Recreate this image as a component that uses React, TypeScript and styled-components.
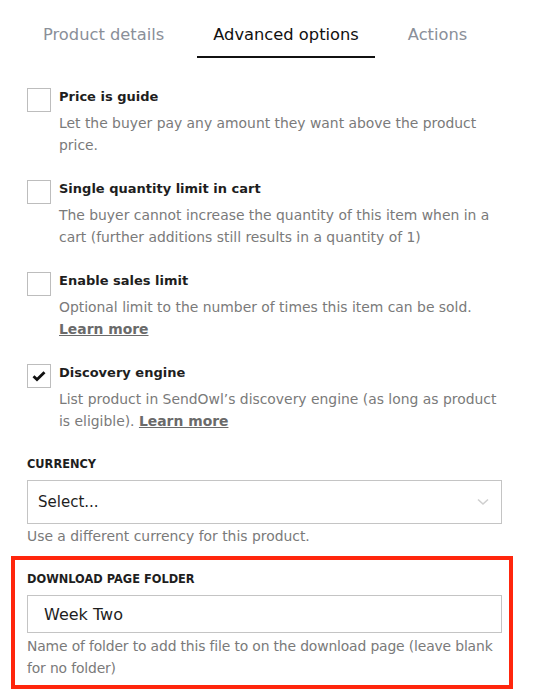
import * as React from 'react'
import styled, {createGlobalStyle} from 'styled-components'

const GlobalStyle = createGlobalStyle`
  html, body {
    margin: 0;
    padding: 0;
    background: #fff;
  }
  *, *:before, *:after {
    box-sizing: border-box;
  }
  body {
    font-family: 'DejaVu Sans', 'Open Sans', sans-serif;
    color: #222;
  }
`

const Page = styled.div`
  width: 535px;
  padding: 15px 33px 0 27px;
`

const Tabs = styled.nav`
  display: flex;
  gap: 17px;
  margin-bottom: 29px;
`

const Tab = styled.div<{active?: boolean}>`
  padding: 8px 16px 9px;
  font-size: 16.3px;
  line-height: 24px;
  color: ${p => (p.active ? '#111' : '#8a8f99')};
  border-bottom: 2px solid ${p => (p.active ? '#111' : 'transparent')};
  white-space: nowrap;
`

const OptionList = styled.div`
  display: flex;
  flex-direction: column;
  gap: 23px;
`

const Option = styled.div`
  display: flex;
  gap: 8px;
  align-items: flex-start;
`

const Box = styled.div<{checked?: boolean}>`
  flex: none;
  width: 24px;
  height: 24px;
  margin-top: 1px;
  border: 1px solid #bdbdbd;
  display: flex;
  align-items: center;
  justify-content: center;
`

const OptionText = styled.div`
  flex: 1;
`

const Title = styled.div`
  font-size: 13px;
  font-weight: 700;
  line-height: 20px;
  color: #1e1e1e;
  margin-bottom: 5px;
`

const Desc = styled.div`
  font-size: 13.9px;
  line-height: 22px;
  color: #7a7a7a;
`

const More = styled.a`
  color: #6a6a6a;
  font-weight: 700;
  text-decoration: underline;
`

const Field = styled.div<{spaced?: boolean}>`
  display: flex;
  flex-direction: column;
  margin-top: ${p => (p.spaced ? '24px' : '0')};
`

const Label = styled.div`
  font-size: 11.4px;
  font-weight: 700;
  line-height: 16px;
  color: #1e1e1e;
  text-transform: uppercase;
  margin-bottom: 8px;
`

const Select = styled.div`
  height: 44px;
  border: 1px solid #c4c4c4;
  display: flex;
  align-items: center;
  justify-content: space-between;
  padding: 0 12px 0 10px;
  font-size: 15px;
  color: #1e1e1e;
`

const Input = styled.div`
  height: 38px;
  border: 1px solid #c4c4c4;
  display: flex;
  align-items: center;
  padding: 0 16px;
  font-size: 16px;
  color: #1e1e1e;
`

const Help = styled.div<{wide?: boolean}>`
  font-size: 13.9px;
  line-height: 22px;
  color: #7a7a7a;
  margin-top: ${p => (p.wide ? '2px' : '1px')};
  margin-right: ${p => (p.wide ? '-8px' : '0')};
  letter-spacing: ${p => (p.wide ? '-0.15px' : 'normal')};
`

const Highlight = styled.div`
  margin: 9px -11px 0 -16px;
  border: 4px solid #ff260d;
  padding: 11px 7px 6px 12px;
`

const Check = () => (
  <svg width="14" height="12" viewBox="0 0 14 12">
    <path d="M1.5 6.2 L5 9.6 L12.5 2.2" fill="none" stroke="#111" strokeWidth="2.8" />
  </svg>
)

const Chevron = () => (
  <svg width="12" height="8" viewBox="0 0 12 8">
    <path d="M1 1.5 L6 6 L11 1.5" fill="none" stroke="#cfcfcf" strokeWidth="1.6" />
  </svg>
)

const options = [
  {
    title: 'Price is guide',
    desc: 'Let the buyer pay any amount they want above the product price.',
  },
  {
    title: 'Single quantity limit in cart',
    desc: 'The buyer cannot increase the quantity of this item when in a cart (further additions still results in a quantity of 1)',
  },
  {
    title: 'Enable sales limit',
    desc: 'Optional limit to the number of times this item can be sold.',
    more: true,
    breakMore: true,
  },
  {
    title: 'Discovery engine',
    desc: 'List product in SendOwl’s discovery engine (as long as product is eligible).',
    more: true,
    checked: true,
  },
]

export default function App() {
  return (
    <>
      <GlobalStyle />
      <Page>
        <Tabs>
          <Tab>Product details</Tab>
          <Tab active>Advanced options</Tab>
          <Tab>Actions</Tab>
        </Tabs>
        <OptionList>
          {options.map(o => (
            <Option key={o.title}>
              <Box checked={o.checked}>{o.checked && <Check />}</Box>
              <OptionText>
                <Title>{o.title}</Title>
                <Desc>
                  {o.desc}
                  {o.breakMore && <br />}
                  {o.more && !o.breakMore && ' '}
                  {o.more && <More>Learn more</More>}
                </Desc>
              </OptionText>
            </Option>
          ))}
        </OptionList>
        <Field spaced>
          <Label>Currency</Label>
          <Select>
            <span>Select...</span>
            <Chevron />
          </Select>
          <Help>Use a different currency for this product.</Help>
        </Field>
        <Highlight>
          <Field>
            <Label>Download page folder</Label>
            <Input>Week Two</Input>
            <Help wide>Name of folder to add this file to on the download page (leave blank for no folder)</Help>
          </Field>
        </Highlight>
      </Page>
    </>
  )
}
